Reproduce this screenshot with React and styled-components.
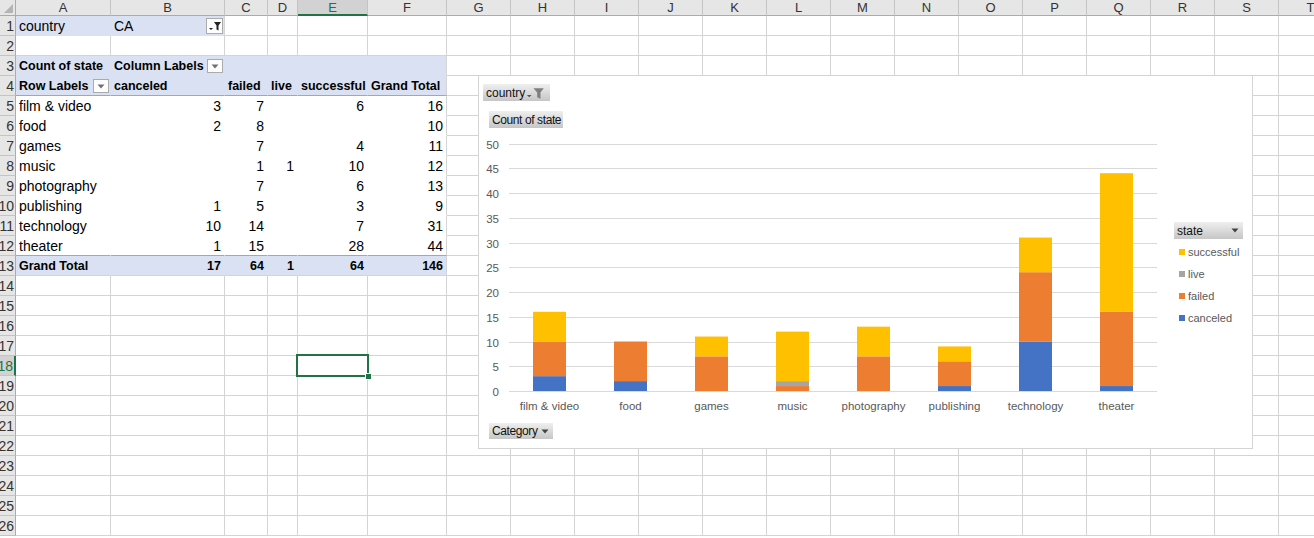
import React from 'react'
import styled, { createGlobalStyle } from 'styled-components'

const GlobalStyle = createGlobalStyle`
  html, body { margin: 0; padding: 0; background: #fff; }
  body { font-family: "Liberation Sans", Arial, sans-serif; overflow: hidden; }
`

const BLUE = '#D9E1F2'
const EDGE = '#8EA9DB'
const GRID = '#d4d4d4'
const GREEN = '#217346'

const COLS = [
  { key: 'A', w: 95 }, { key: 'B', w: 114 }, { key: 'C', w: 43 }, { key: 'D', w: 30 },
  { key: 'E', w: 70 }, { key: 'F', w: 79 }, { key: 'G', w: 64 }, { key: 'H', w: 64 },
  { key: 'I', w: 64 }, { key: 'J', w: 64 }, { key: 'K', w: 64 }, { key: 'L', w: 64 },
  { key: 'M', w: 64 }, { key: 'N', w: 64 }, { key: 'O', w: 64 }, { key: 'P', w: 64 },
  { key: 'Q', w: 64 }, { key: 'R', w: 64 }, { key: 'S', w: 64 }, { key: 'T', w: 64 },
]

// canceled, failed, live, successful, total
const DATA = [
  ['film & video', 3, 7, null, 6, 16],
  ['food', 2, 8, null, null, 10],
  ['games', null, 7, null, 4, 11],
  ['music', null, 1, 1, 10, 12],
  ['photography', null, 7, null, 6, 13],
  ['publishing', 1, 5, null, 3, 9],
  ['technology', 10, 14, null, 7, 31],
  ['theater', 1, 15, null, 28, 44],
]
const TOTALS = ['Grand Total', 17, 64, 1, 64, 146]
const HEADS = ['Row Labels', 'canceled', 'failed', 'live', 'successful', 'Grand Total']

const SERIES = [
  { key: 'canceled', color: '#4472C4' },
  { key: 'failed', color: '#ED7D31' },
  { key: 'live', color: '#A5A5A5' },
  { key: 'successful', color: '#FFC000' },
]

const ROWS = Array.from({ length: 26 }, (_, i) => i + 1)

function cellSpec(r, ci) {
  const s = { text: null, bold: false, right: false, fill: null, lineR: GRID, lineB: GRID, btn: null }
  if (r === 1 && ci < 2) {
    s.fill = BLUE
    s.lineB = BLUE
    if (ci === 0) { s.lineR = BLUE; s.text = 'country' }
    else { s.text = 'CA'; s.btn = 'filter' }
  }
  if (r >= 3 && r <= 13 && ci < 6) {
    const filled = r === 3 || r === 4 || r === 13
    const bg = filled ? BLUE : '#fff'
    s.fill = filled ? BLUE : null
    s.lineR = ci === 5 ? GRID : bg
    s.lineB = r === 4 || r === 12 ? EDGE : r === 13 ? GRID : bg
    if (r === 3) {
      s.bold = true
      if (ci === 0) s.text = 'Count of state'
      if (ci === 1) { s.text = 'Column Labels'; s.btn = 'drop' }
    }
    if (r === 4) {
      s.bold = true
      s.text = HEADS[ci]
      if (ci === 0) s.btn = 'drop'
    }
    if (r >= 5 && r <= 12) {
      const v = DATA[r - 5][ci]
      s.text = v
      s.right = ci > 0
    }
    if (r === 13) {
      s.bold = true
      s.text = TOTALS[ci]
      s.right = ci > 0
    }
  }
  return s
}

const Sheet = styled.div`
  position: relative;
  display: grid;
  grid-template-columns: 16px ${COLS.map((c) => c.w + 'px').join(' ')};
  grid-template-rows: 16px;
  grid-auto-rows: 20px;
  width: 1314px;
  height: 538px;
  overflow: hidden;
`

const Corner = styled.div`
  position: relative;
  background: #e6e6e6;
  border-right: 1px solid #ababab;
  border-bottom: 1px solid #ababab;
  box-sizing: border-box;
  &::after {
    content: '';
    position: absolute;
    right: 2px;
    bottom: 2px;
    border-left: 9px solid transparent;
    border-bottom: 9px solid #b4b4b4;
  }
`

const ColHead = styled.div`
  box-sizing: border-box;
  display: flex;
  align-items: center;
  justify-content: center;
  background: ${(p) => (p.$active ? '#d2d2d2' : '#e6e6e6')};
  color: ${(p) => (p.$active ? GREEN : '#333')};
  border-right: 1px solid #c4c4c4;
  border-bottom: ${(p) => (p.$active ? `2px solid ${GREEN}` : '1px solid #ababab')};
  font-size: 13px;
  line-height: 1;
  white-space: nowrap;
  overflow: hidden;
`

const RowHead = styled.div`
  box-sizing: border-box;
  display: flex;
  align-items: center;
  justify-content: flex-end;
  padding-right: 1px;
  background: ${(p) => (p.$active ? '#d2d2d2' : '#e6e6e6')};
  color: ${(p) => (p.$active ? GREEN : '#333')};
  border-right: ${(p) => (p.$active ? `2px solid ${GREEN}` : '1px solid #ababab')};
  border-bottom: 1px solid #c4c4c4;
  font-size: 14px;
  line-height: 1;
  white-space: nowrap;
  overflow: hidden;
`

const Cell = styled.div`
  position: relative;
  box-sizing: border-box;
  display: flex;
  align-items: center;
  justify-content: ${(p) => (p.$right ? 'flex-end' : 'flex-start')};
  padding: 1px 3px 0 3px;
  background: ${(p) => p.$fill || '#fff'};
  border-right: 1px solid ${(p) => p.$lineR};
  border-bottom: 1px solid ${(p) => p.$lineB};
  font-size: ${(p) => (p.$bold ? '12.5px' : '14px')};
  font-weight: ${(p) => (p.$bold ? 700 : 400)};
  color: #000;
  line-height: 1;
  white-space: nowrap;
  z-index: ${(p) => (p.$selected ? 1 : 0)};

  ${(p) => p.$selected && `
    &::before {
      content: '';
      position: absolute;
      top: -2px; left: -2px; right: -2px; bottom: -2px;
      border: 2px solid ${GREEN};
    }
    &::after {
      content: '';
      position: absolute;
      right: -5px; bottom: -5px;
      width: 5px; height: 5px;
      background: ${GREEN};
      border: 1px solid #fff;
    }
  `}
`

const CellButton = styled.div`
  box-sizing: border-box;
  margin-left: auto;
  margin-right: -2px;
  width: ${(p) => (p.$filter ? '17px' : '16px')};
  height: ${(p) => (p.$filter ? '16px' : '14px')};
  display: flex;
  align-items: center;
  justify-content: center;
  background: #fdfdfd;
  border: 1px solid #ababab;
`

const FilterGlyph = ({ color = '#222' }) => (
  <svg width="14" height="12" viewBox="0 0 14 12">
    <polygon points="1,8 5,8 3,10" fill={color} />
    <polygon points="6,2 13,2 10.5,5.5 10.5,10.5 8.5,9.5 8.5,5.5" fill={color} />
  </svg>
)

const DropGlyph = () => (
  <svg width="8" height="5" viewBox="0 0 8 5">
    <polygon points="0.5,0.5 7.5,0.5 4,4.5" fill="#707070" />
  </svg>
)

/* ---------------- chart ---------------- */

const Chart = styled.div`
  position: absolute;
  left: 478px;
  top: 75px;
  width: 775px;
  height: 374px;
  box-sizing: border-box;
  background: #fff;
  border: 1px solid #d4d4d4;
  display: flex;
  flex-direction: column;
  padding-top: 8px;
  z-index: 2;
`

const FieldButton = styled.div`
  box-sizing: border-box;
  align-self: flex-start;
  display: flex;
  align-items: center;
  justify-content: space-between;
  width: ${(p) => p.$w}px;
  height: ${(p) => p.$h || 17}px;
  margin-left: ${(p) => p.$indent || 0}px;
  margin-top: ${(p) => p.$top || 0}px;
  padding: 0 4px 0 3px;
  background: linear-gradient(#efefef, #c6c6c6);
  font-size: 12px;
  letter-spacing: ${(p) => p.$tight ? '-0.4px' : '0'};
  color: #111;
  line-height: 1;
  white-space: nowrap;
`

const ChartBody = styled.div`
  display: flex;
  margin-top: 7px;
  height: 281px;
`

const Legend = styled.div`
  display: flex;
  flex-direction: column;
  margin-left: 8px;
  padding-top: 87px;
`

const LegendList = styled.div`
  display: flex;
  flex-direction: column;
  padding-top: 2px;
`

const LegendItem = styled.div`
  display: flex;
  align-items: center;
  gap: 3px;
  height: 22px;
  padding-left: 5px;
  font-size: 11px;
  color: #595959;
`

const Swatch = styled.span`
  width: 6px;
  height: 6px;
  background: ${(p) => p.$color};
`

const BASE = 256
const K = 4.95

function Plot() {
  const ticks = [0, 5, 10, 15, 20, 25, 30, 35, 40, 45, 50]
  return (
    <svg width="687" height="281" viewBox="0 0 687 281">
      {ticks.map((t) => {
        const y = Math.round(BASE - t * K) + 0.5
        return (
          <g key={t}>
            <line x1="30" x2="678" y1={y} y2={y} stroke="#d9d9d9" strokeWidth="1" />
            <text x="20" y={y + 4} textAnchor="end" fontSize="11.5" fill="#595959"
              fontFamily="Liberation Sans, Arial, sans-serif">{t}</text>
          </g>
        )
      })}
      {DATA.map((row, i) => {
        const cx = 30 + 40.5 + 81 * i
        let acc = 0
        return (
          <g key={row[0]}>
            {SERIES.map((s, si) => {
              const v = row[si + 1]
              if (!v) return null
              const y0 = BASE - acc * K
              acc += v
              const y1 = BASE - acc * K
              return <rect key={s.key} x={cx - 16.5} y={y1} width="33" height={y0 - y1} fill={s.color} />
            })}
            <text x={cx} y="275" textAnchor="middle" fontSize="11.5" fill="#595959"
              fontFamily="Liberation Sans, Arial, sans-serif">{row[0]}</text>
          </g>
        )
      })}
    </svg>
  )
}

function PivotChart() {
  return (
    <Chart>
      <FieldButton $w={67} $indent={4}>
        <span>country</span>
        <svg width="22" height="14" viewBox="0 0 22 14">
          <polygon points="2,9 7,9 4.5,11.5" fill="#555" />
          <polygon points="9,2 20,2 16.5,6.5 16.5,13 13,11.5 13,6.5" fill="#7f7f7f" />
        </svg>
      </FieldButton>
      <FieldButton $w={74} $indent={10} $top={10} $tight>
        <span>Count of state</span>
      </FieldButton>
      <ChartBody>
        <Plot />
        <Legend>
          <FieldButton $w={69}>
            <span>state</span>
            <svg width="8" height="5" viewBox="0 0 8 5">
              <polygon points="0.5,0.5 7.5,0.5 4,4.5" fill="#444" />
            </svg>
          </FieldButton>
          <LegendList>
            {[...SERIES].reverse().map((s) => (
              <LegendItem key={s.key}>
                <Swatch $color={s.color} />
                {s.key}
              </LegendItem>
            ))}
          </LegendList>
        </Legend>
      </ChartBody>
      <FieldButton $w={64} $h={16} $indent={10} $top={7} $tight>
        <span>Category</span>
        <svg width="8" height="5" viewBox="0 0 8 5">
          <polygon points="0.5,0.5 7.5,0.5 4,4.5" fill="#444" />
        </svg>
      </FieldButton>
    </Chart>
  )
}

export default function App() {
  return (
    <>
      <GlobalStyle />
      <Sheet>
        <Corner />
        {COLS.map((c) => (
          <ColHead key={c.key} $active={c.key === 'E'}>{c.key}</ColHead>
        ))}
        {ROWS.map((r) => (
          <React.Fragment key={r}>
            <RowHead $active={r === 18}>{r}</RowHead>
            {COLS.map((c, ci) => {
              const s = cellSpec(r, ci)
              return (
                <Cell
                  key={c.key}
                  $fill={s.fill}
                  $lineR={s.lineR}
                  $lineB={s.lineB}
                  $bold={s.bold}
                  $right={s.right}
                  $selected={r === 18 && c.key === 'E'}
                >
                  {s.text}
                  {s.btn && (
                    <CellButton $filter={s.btn === 'filter'}>
                      {s.btn === 'filter' ? <FilterGlyph /> : <DropGlyph />}
                    </CellButton>
                  )}
                </Cell>
              )
            })}
          </React.Fragment>
        ))}
        <PivotChart />
      </Sheet>
    </>
  )
}
